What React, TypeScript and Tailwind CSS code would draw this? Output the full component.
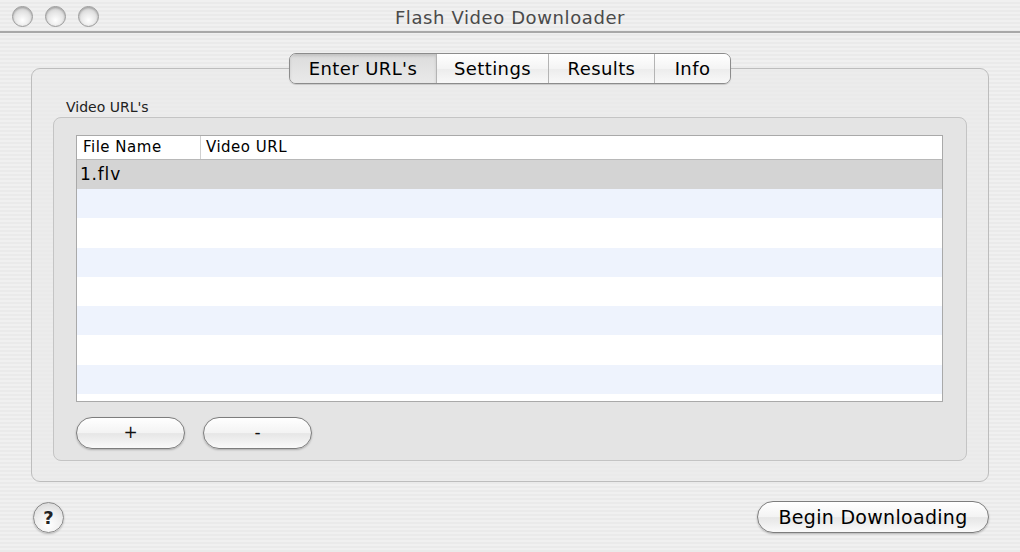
import React from 'react';

const stripes =
  'bg-[repeating-linear-gradient(180deg,#f0f0f0_0px,#f0f0f0_2px,#eaeaea_2px,#eaeaea_4px)]';

const TrafficLight = () => (
  <div className="w-[21px] h-[21px] rounded-full border border-[#9a9a9a] bg-[radial-gradient(circle_at_50%_70%,#ffffff_0%,#e8e8e8_45%,#c4c4c4_100%)] shadow-[inset_0_1px_2px_rgba(0,0,0,0.25)]" />
);

const tabs = [
  { label: "Enter URL's", w: 'w-[146px]', active: true },
  { label: 'Settings', w: 'w-[112px]', active: false },
  { label: 'Results', w: 'w-[106px]', active: false },
  { label: 'Info', w: 'w-[76px]', active: false },
];

const rows = [0, 1, 2, 3, 4, 5, 6, 7];

const pill =
  'rounded-full border border-[#7d7d7d] bg-[linear-gradient(180deg,#ffffff,#f3f3f3_50%,#e6e6e6_52%,#fafafa)] shadow-[0_1px_2px_rgba(0,0,0,0.25)] flex items-center justify-center';

const App = () => {
  return (
    <div
      className={`w-[1020px] h-[552px] overflow-hidden flex flex-col ${stripes} text-black`}
      style={{ fontFamily: '"DejaVu Sans", "Liberation Sans", sans-serif' }}
    >
      {/* title bar */}
      <div className="h-[33px] shrink-0 flex items-center relative border-b-2 border-[#a8a8a8]">
        <div className="flex gap-[12px] pl-[12px] pt-[1px]">
          <TrafficLight />
          <TrafficLight />
          <TrafficLight />
        </div>
        <div className="absolute inset-0 pt-[3px] flex items-center justify-center text-[18px] text-[#4a4a4a] tracking-[0.6px]">
          Flash Video Downloader
        </div>
      </div>

      {/* tab view */}
      <div className="mt-[20px] px-[31px] flex flex-col">
        <div className="flex justify-center relative z-10">
          <div className="flex h-[31px] rounded-[7px] border border-[#8c8c8c] overflow-hidden shadow-[0_1px_1px_rgba(0,0,0,0.15)]">
            {tabs.map((t, i) => (
              <div
                key={t.label}
                className={`${t.w} flex items-center justify-center text-[18px] tracking-[0.4px] ${
                  i > 0 ? 'border-l border-[#b4b4b4]' : ''
                } ${
                  t.active
                    ? 'bg-[linear-gradient(180deg,#dcdcdc,#e9e9e9)] shadow-[inset_0_2px_3px_rgba(0,0,0,0.12)]'
                    : 'bg-[linear-gradient(180deg,#ffffff,#f4f4f4_50%,#ececec_51%,#f8f8f8)]'
                }`}
              >
                {t.label}
              </div>
            ))}
          </div>
        </div>

        <div className="-mt-[16px] h-[414px] rounded-[9px] border border-[#bdbdbd] bg-[#e9e9e9]/60 px-[21px] pt-[29px] flex flex-col">
          <div className="text-[14px] text-[#222] pl-[13px] h-[19px] leading-[19px]">Video URL's</div>

          <div className="h-[344px] rounded-[8px] border border-[#c4c4c4] bg-[#e1e1e1]/70 pt-[17px] pl-[22px] pr-[23px] flex flex-col">
            {/* table */}
            <div className="h-[267px] border border-[#a9a9a9] bg-white overflow-hidden flex flex-col">
              <div className="h-[24px] shrink-0 flex items-center text-[15px] tracking-[0.5px] border-b border-[#b8b8b8] bg-white">
                <div className="w-[124px] pl-[6px] border-r border-[#d0d0d0] h-full flex items-center">File Name</div>
                <div className="pl-[5px]">Video URL</div>
              </div>
              <div className="h-[29px] shrink-0 bg-[#d4d4d4] flex items-center pl-[3px] text-[17px] tracking-[0.8px]">1.flv</div>
              {rows.map((r) => (
                <div
                  key={r}
                  className={`h-[29.3px] shrink-0 ${r % 2 === 0 ? 'bg-[#eef3fd]' : 'bg-white'}`}
                />
              ))}
            </div>

            <div className="flex gap-[18px] mt-[15px]">
              {['+', '-'].map((s) => (
                <div key={s} className={`w-[109px] h-[32px] ${pill} text-[17px] text-[#111]`}>
                  {s}
                </div>
              ))}
            </div>
          </div>
        </div>

        <div className="mt-[19px] flex items-center justify-between">
          <div className="ml-[2px] w-[31px] h-[31px] rounded-full border border-[#8a8a8a] bg-[radial-gradient(circle_at_50%_75%,#ffffff,#ececec_55%,#d2d2d2)] shadow-[0_1px_2px_rgba(0,0,0,0.25)] flex items-center justify-center text-[18px] font-bold text-[#222]">
            ?
          </div>
          <div className={`w-[232px] h-[32px] ${pill} text-[19px] tracking-[0.3px]`}>Begin Downloading</div>
        </div>
      </div>
    </div>
  );
};

export default App;
